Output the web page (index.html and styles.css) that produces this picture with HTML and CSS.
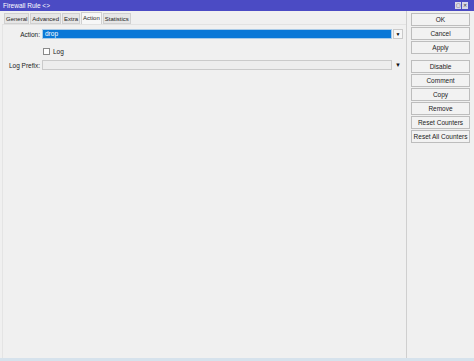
FILE: index.html
```html
<!DOCTYPE html>
<html lang="en">
<head>
  <meta charset="UTF-8">
  <title>Firewall Rule</title>
  <link rel="stylesheet" href="styles.css">
</head>
<body>
  <div class="window">
    <div class="titlebar">
      <span class="title">Firewall Rule &lt;&gt;</span>
      <div class="wbtns">
        <span class="wbtn">&#9634;</span>
        <span class="wbtn">&#10005;</span>
      </div>
    </div>

    <div class="content">
      <div class="main">
        <div class="tabs">
          <span class="tab">General</span>
          <span class="tab">Advanced</span>
          <span class="tab">Extra</span>
          <span class="tab active">Action</span>
          <span class="tab">Statistics</span>
        </div>

        <div class="panel">
          <div class="row">
            <label class="lbl">Action:</label>
            <div class="field selected">drop</div>
            <span class="ddbtn">&#9660;</span>
          </div>

          <div class="row check-row">
            <span class="lbl"></span>
            <span class="checkbox"></span>
            <span class="check-text">Log</span>
          </div>

          <div class="row">
            <label class="lbl">Log Prefix:</label>
            <div class="field"></div>
            <span class="arrow">&#9660;</span>
          </div>
        </div>
      </div>

      <div class="side">
        <button class="btn">OK</button>
        <button class="btn">Cancel</button>
        <button class="btn">Apply</button>
        <button class="btn spaced">Disable</button>
        <button class="btn">Comment</button>
        <button class="btn">Copy</button>
        <button class="btn">Remove</button>
        <button class="btn">Reset Counters</button>
        <button class="btn">Reset All Counters</button>
      </div>
    </div>

    <div class="bottom"></div>
  </div>
</body>
</html>
```

FILE: styles.css
```css
* {
  box-sizing: border-box;
  margin: 0;
  padding: 0;
  font-family: "Liberation Sans", Arial, sans-serif;
}

body {
  background-color: #f0f0f0;
  width: 474px;
  height: 361px;
  overflow: hidden;
}

.window {
  display: flex;
  flex-direction: column;
  height: 361px;
}

.titlebar {
  height: 11px;
  background-color: #4b4bc4;
  display: flex;
  align-items: center;
  justify-content: space-between;
  padding: 0 6px 0 3px;
}

.title {
  color: #fff;
  font-size: 6.5px;
}

.wbtns {
  display: flex;
  gap: 1px;
}

.wbtn {
  width: 6px;
  height: 7px;
  background-color: #d8d8e8;
  color: #333;
  font-size: 5px;
  line-height: 7px;
  text-align: center;
}

.content {
  flex: 1;
  display: flex;
}

.main {
  width: 407px;
  padding-left: 2px;
  border-right: 1px solid #cfcfcf;
  display: flex;
  flex-direction: column;
}

.tabs {
  display: flex;
  padding: 2px 0 0 2px;
  height: 14px;
  border-bottom: 1px solid #e2e2e2;
}

.tab {
  font-size: 6px;
  color: #222;
  height: 11px;
  line-height: 10px;
  padding: 0 1px;
  margin-right: 1px;
  background-color: #e6e6e6;
  border: 1px solid #d0d0d0;
}

.tab.active {
  background-color: #f7f7f7;
  height: 12px;
  margin-top: -1px;
  border-bottom: none;
}

.panel {
  flex: 1;
  padding-top: 4px;
  border-left: 1px solid #e4e4e4;
}

.row {
  display: flex;
  align-items: center;
  height: 10px;
}

.check-row {
  margin: 8px 0 5px;
  height: 8px;
}

.lbl {
  width: 39px;
  text-align: right;
  font-size: 6.5px;
  color: #222;
  padding-right: 2px;
}

.field {
  width: 350px;
  height: 10px;
  background-color: #ededed;
  border: 1px solid #cacaca;
  font-size: 6.5px;
  line-height: 8px;
  padding-left: 2px;
}

.field.selected {
  background-color: #0a78d7;
  color: #fff;
  border-color: #a9cbe8;
}

.ddbtn {
  width: 10px;
  height: 10px;
  margin-left: 1px;
  border: 1px solid #cacaca;
  background-color: #f6f6f6;
  font-size: 5px;
  line-height: 8px;
  text-align: center;
}

.arrow {
  margin-left: 3px;
  font-size: 6px;
  color: #111;
}

.checkbox {
  width: 7px;
  height: 7px;
  margin-left: 1px;
  border: 1px solid #8a8a8a;
  background-color: #fff;
}

.check-text {
  font-size: 6.5px;
  color: #222;
  margin-left: 3px;
}

.side {
  flex: 1;
  display: flex;
  flex-direction: column;
  gap: 1px;
  padding: 2px 0 0 4px;
}

.btn {
  width: 59px;
  height: 13px;
  background-color: #f2f2f2;
  border: 1px solid #bdbdbd;
  font-size: 6.5px;
  color: #222;
}

.btn.spaced {
  margin-top: 5px;
}

.bottom {
  height: 3px;
  background-color: #d6e2ec;
}
```
